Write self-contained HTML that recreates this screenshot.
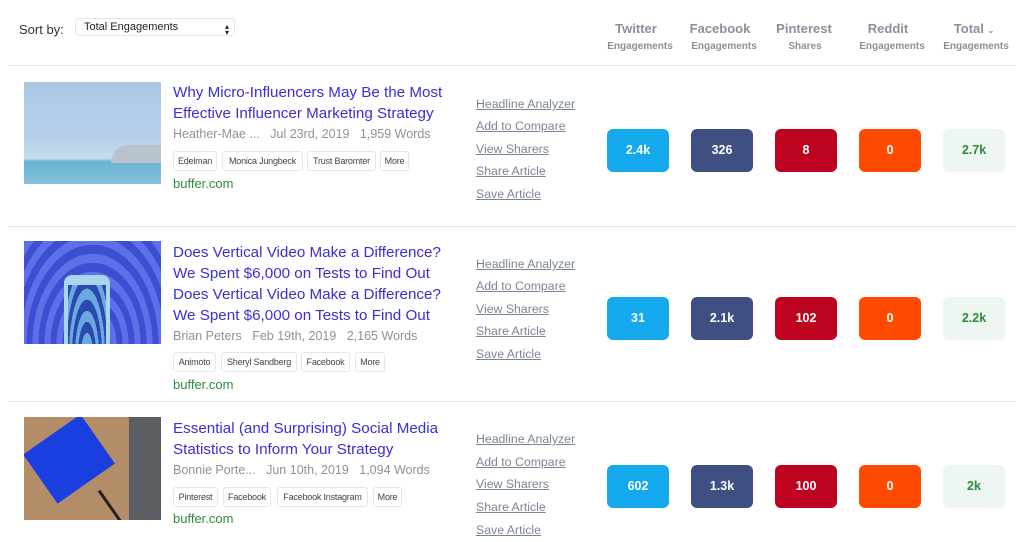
<!DOCTYPE html>
<html><head><meta charset="utf-8"><style>
*{margin:0;padding:0;box-sizing:border-box}
body{width:1024px;height:542px;background:#fff;font-family:"Liberation Sans",Arial,sans-serif;position:relative;overflow:hidden}
.a{position:absolute;white-space:nowrap}
.hr{position:absolute;left:8px;width:1008px;height:1px;background:#e3e6ec}
.h1{font-size:13px;color:#8a909a;font-weight:bold;text-align:center;width:80px}
.h2{font-size:10px;color:#8a909a;font-weight:bold;text-align:center;width:80px}
.t{font-size:15.2px;color:#3a2fd0;line-height:21px}
.m{font-size:12.5px;color:#8e9196}
.tag{position:absolute;height:20px;border:1px solid #e4e6ea;border-radius:3px;font-size:9px;color:#444;line-height:18px;text-align:center;white-space:nowrap;overflow:hidden;letter-spacing:-0.2px}
.d{font-size:13px;color:#2e8b3a}
.l{font-size:12.3px;color:#7a8494;text-decoration:underline}
.b{position:absolute;width:62px;height:43px;border-radius:6px;color:#fff;font-weight:bold;font-size:12.5px;text-align:center;line-height:43px}
.tw{background:#13a9ec}.fb{background:#3f4f82}.pi{background:#bd0320}.rd{background:#ff4b02}.to{background:#eef6f1;color:#2e8b3a}
</style></head><body>
<div class="a" style="left:19px;top:22px;font-size:13px;color:#333">Sort by:</div>
<div class="a" style="left:75px;top:18px;width:160px;height:18px;border:1px solid #e6e6e6;border-radius:4px;font-size:11px;color:#222;line-height:16px;padding-left:8px">Total Engagements<span style="position:absolute;right:5px;top:0;font-size:8px">&#x25B4;</span><span style="position:absolute;right:5px;top:6px;font-size:8px">&#x25BE;</span></div>

<div class="a h1" style="left:596px;top:21px">Twitter</div><div class="a h2" style="left:600px;top:41px">Engagements</div>
<div class="a h1" style="left:680px;top:21px">Facebook</div><div class="a h2" style="left:684px;top:41px">Engagements</div>
<div class="a h1" style="left:764px;top:21px">Pinterest</div><div class="a h2" style="left:765px;top:41px">Shares</div>
<div class="a h1" style="left:848px;top:21px">Reddit</div><div class="a h2" style="left:852px;top:41px">Engagements</div>
<div class="a h1" style="left:934px;top:21px">Total <span style="font-size:8px">&#x2304;</span></div><div class="a h2" style="left:936px;top:41px">Engagements</div>

<div class="hr" style="top:65px"></div>
<div class="hr" style="top:226px"></div>
<div class="hr" style="top:401px"></div>

<!-- Row 1 -->
<div class="a" style="left:24px;top:82px;width:137px;height:102px;background:linear-gradient(#a9c8e6 0%,#b7d1ea 55%,#c5dbe9 75%,#67b2d3 78%,#86c3dc 100%)"><div style="position:absolute;right:0;top:63px;width:50px;height:18px;background:#b9c3cc;border-radius:30px 0 0 0"></div></div>
<div class="a t" style="left:173px;top:82px">Why Micro-Influencers May Be the Most<br>Effective Influencer Marketing Strategy</div>
<div class="a m" style="left:173px;top:127px">Heather-Mae ... &nbsp;&nbsp;Jul 23rd, 2019 &nbsp;&nbsp;1,959 Words</div>
<div class="tag" style="left:173px;top:151px;width:44px">Edelman</div>
<div class="tag" style="left:222px;top:151px;width:81px">Monica Jungbeck</div>
<div class="tag" style="left:307px;top:151px;width:69px">Trust Baromter</div>
<div class="tag" style="left:380px;top:151px;width:29px">More</div>
<div class="a d" style="left:173px;top:176px">buffer.com</div>
<div class="a l" style="left:476px;top:97px">Headline Analyzer</div>
<div class="a l" style="left:476px;top:119px">Add to Compare</div>
<div class="a l" style="left:476px;top:142px">View Sharers</div>
<div class="a l" style="left:476px;top:164px">Share Article</div>
<div class="a l" style="left:476px;top:187px">Save Article</div>
<div class="b tw" style="left:607px;top:129px">2.4k</div>
<div class="b fb" style="left:691px;top:129px">326</div>
<div class="b pi" style="left:775px;top:129px">8</div>
<div class="b rd" style="left:859px;top:129px">0</div>
<div class="b to" style="left:943px;top:129px">2.7k</div>

<!-- Row 2 -->
<div class="a" style="left:24px;top:241px;width:137px;height:103px;background:repeating-radial-gradient(ellipse at 50% 100%,#3d4fd0 0 6px,#5d70e8 6px 12px);overflow:hidden"><div style="position:absolute;left:40px;top:34px;width:46px;height:80px;background:#a8d6ee;border-radius:8px"><div style="position:absolute;left:4px;top:10px;right:4px;bottom:0;background:repeating-radial-gradient(ellipse at 50% 100%,#2a4ab0 0 3px,#6aa8e0 3px 6px)"></div></div></div>
<div class="a t" style="left:173px;top:242px">Does Vertical Video Make a Difference?<br>We Spent $6,000 on Tests to Find Out<br>Does Vertical Video Make a Difference?<br>We Spent $6,000 on Tests to Find Out</div>
<div class="a m" style="left:173px;top:329px">Brian Peters &nbsp;&nbsp;Feb 19th, 2019 &nbsp;&nbsp;2,165 Words</div>
<div class="tag" style="left:173px;top:352px;width:43px">Animoto</div>
<div class="tag" style="left:221px;top:352px;width:76px">Sheryl Sandberg</div>
<div class="tag" style="left:301px;top:352px;width:49px">Facebook</div>
<div class="tag" style="left:355px;top:352px;width:30px">More</div>
<div class="a d" style="left:173px;top:377px">buffer.com</div>
<div class="a l" style="left:476px;top:257px">Headline Analyzer</div>
<div class="a l" style="left:476px;top:279px">Add to Compare</div>
<div class="a l" style="left:476px;top:302px">View Sharers</div>
<div class="a l" style="left:476px;top:324px">Share Article</div>
<div class="a l" style="left:476px;top:347px">Save Article</div>
<div class="b tw" style="left:607px;top:297px">31</div>
<div class="b fb" style="left:691px;top:297px">2.1k</div>
<div class="b pi" style="left:775px;top:297px">102</div>
<div class="b rd" style="left:859px;top:297px">0</div>
<div class="b to" style="left:943px;top:297px">2.2k</div>

<!-- Row 3 -->
<div class="a" style="left:24px;top:417px;width:137px;height:103px;background:#b38d68;overflow:hidden"><div style="position:absolute;left:105px;top:0;width:32px;height:103px;background:#5b5e63"></div><div style="position:absolute;left:10px;top:12px;width:70px;height:60px;background:#1a3fe0;transform:rotate(-35deg)"></div><div style="position:absolute;left:85px;top:70px;width:3px;height:40px;background:#222;transform:rotate(-35deg)"></div></div>
<div class="a t" style="left:173px;top:418px">Essential (and Surprising) Social Media<br>Statistics to Inform Your Strategy</div>
<div class="a m" style="left:173px;top:463px">Bonnie Porte... &nbsp;&nbsp;Jun 10th, 2019 &nbsp;&nbsp;1,094 Words</div>
<div class="tag" style="left:173px;top:487px;width:45px">Pinterest</div>
<div class="tag" style="left:223px;top:487px;width:48px">Facebook</div>
<div class="tag" style="left:277px;top:487px;width:91px">Facebook Instagram</div>
<div class="tag" style="left:373px;top:487px;width:29px">More</div>
<div class="a d" style="left:173px;top:511px">buffer.com</div>
<div class="a l" style="left:476px;top:432px">Headline Analyzer</div>
<div class="a l" style="left:476px;top:455px">Add to Compare</div>
<div class="a l" style="left:476px;top:477px">View Sharers</div>
<div class="a l" style="left:476px;top:500px">Share Article</div>
<div class="a l" style="left:476px;top:523px">Save Article</div>
<div class="b tw" style="left:607px;top:465px">602</div>
<div class="b fb" style="left:691px;top:465px">1.3k</div>
<div class="b pi" style="left:775px;top:465px">100</div>
<div class="b rd" style="left:859px;top:465px">0</div>
<div class="b to" style="left:943px;top:465px">2k</div>
</body></html>
